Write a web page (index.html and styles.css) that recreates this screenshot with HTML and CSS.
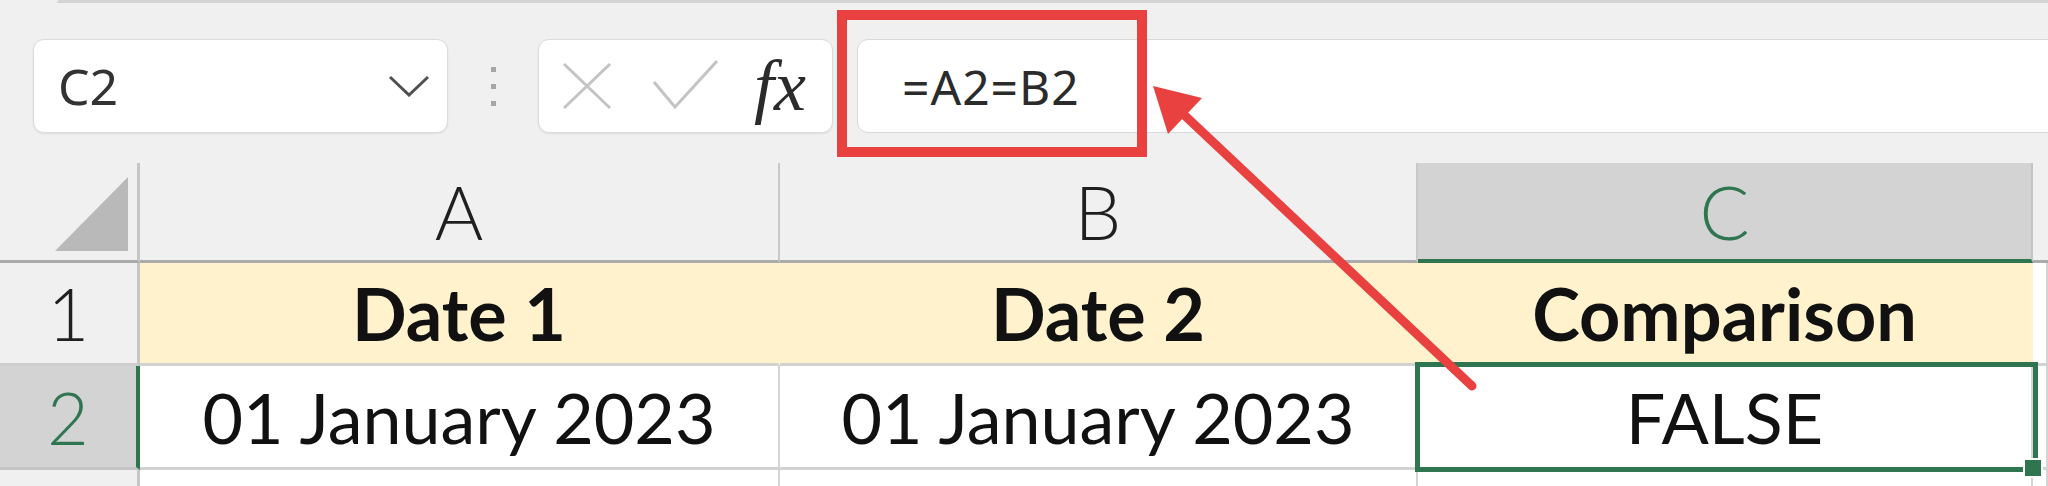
FILE: index.html
```html
<!DOCTYPE html>
<html>
<head>
<meta charset="utf-8">
<title>Excel compare dates</title>
<link rel="stylesheet" href="styles.css">
</head>
<body>
<div class="app">
  <div class="ribbon-edge"></div>
  <div class="formula-bar">
    <div class="name-box">
      <span class="name-text">C2</span>
      <svg class="chevron" viewBox="0 0 42 22"><polyline points="2,2 21,20 40,2" /></svg>
    </div>
    <div class="grip"><span></span><span></span><span></span></div>
    <div class="fx-box">
      <svg class="icon-cancel" viewBox="0 0 50 48"><line x1="2" y1="2" x2="48" y2="46"/><line x1="48" y1="2" x2="2" y2="46"/></svg>
      <svg class="icon-enter" viewBox="0 0 65 52"><polyline points="1,22 22,47 64,1"/></svg>
      <span class="fx">fx</span>
    </div>
    <div class="formula-input">=A2=B2</div>
  </div>
  <div class="sheet">
    <div class="corner"><svg class="corner-tri" viewBox="0 0 137 97"><polygon points="128,14 128,88 55,88"/></svg></div>
    <div class="col-head">A</div>
    <div class="col-head">B</div>
    <div class="col-head active">C</div>
    <div class="col-head filler"></div>

    <div class="row-head">1</div>
    <div class="cell title">Date 1</div>
    <div class="cell title">Date 2</div>
    <div class="cell title">Comparison</div>
    <div class="cell"></div>

    <div class="row-head active">2</div>
    <div class="cell">01 January 2023</div>
    <div class="cell">01 January 2023</div>
    <div class="cell sel">FALSE<span class="sel-frame"></span><span class="fill-handle"></span></div>
    <div class="cell"></div>

    <div class="row-head last"></div>
    <div class="cell last"></div>
    <div class="cell last"></div>
    <div class="cell last"></div>
    <div class="cell last"></div>
  </div>
  <svg class="annotation" viewBox="0 0 2048 486">
    <rect x="842" y="15" width="300" height="137" />
    <line x1="1472" y1="386" x2="1180" y2="111" />
    <polygon points="1153,86 1202,98 1168,134" />
  </svg>
</div>
</body>
</html>
```

FILE: styles.css
```css
* { box-sizing: border-box; }
html, body { margin: 0; padding: 0; }
body {
  width: 2048px;
  height: 486px;
  overflow: hidden;
  background: #f0f0f0;
  font-family: Lato, "Noto Sans", sans-serif;
}
.app {
  position: relative;
  width: 2048px;
  height: 486px;
  overflow: hidden;
}
.ribbon-edge {
  height: 3px;
  margin-left: 57px;
  background: #d3d3d3;
  border-top-left-radius: 3px;
}
.formula-bar {
  display: flex;
  align-items: center;
  height: 160px;
  padding: 36px 0 30px 33px;
}
.name-box {
  flex: none;
  width: 415px;
  height: 94px;
  background: #fff;
  border: 1px solid #dcdcdc;
  border-radius: 11px;
  box-shadow: 0 1px 2px rgba(0,0,0,0.08);
  display: flex;
  align-items: center;
  justify-content: space-between;
  padding: 0 17px 0 24px;
}
.name-text {
  font-family: "Noto Sans", sans-serif;
  font-size: 50px;
  line-height: 1;
  color: #333;
}
.chevron { width: 42px; height: 22px; }
.chevron polyline { fill: none; stroke: #505050; stroke-width: 3; }
.grip {
  flex: none;
  width: 5px;
  margin: 0 42px 0 43px;
  display: flex;
  flex-direction: column;
  gap: 12px;
}
.grip span { display: block; width: 5px; height: 5px; background: #a6a6a6; }
.fx-box {
  flex: none;
  width: 295px;
  height: 94px;
  background: #fff;
  border: 1px solid #dcdcdc;
  border-radius: 11px;
  box-shadow: 0 1px 2px rgba(0,0,0,0.08);
  display: flex;
  align-items: center;
  padding-left: 23px;
}
.icon-cancel { width: 50px; height: 48px; margin-right: 41px; }
.icon-cancel line { stroke: #c4c4c4; stroke-width: 3; }
.icon-enter { width: 65px; height: 52px; margin-right: 36px; }
.icon-enter polyline { fill: none; stroke: #c4c4c4; stroke-width: 3; }
.fx {
  font-family: "Liberation Serif", serif;
  font-style: italic;
  font-size: 72px;
  line-height: 1;
  color: #2b2b2b;
}
.formula-input {
  flex: 1;
  height: 94px;
  margin-left: 24px;
  margin-right: -30px;
  background: #fff;
  border: 1px solid #d8d8d8;
  border-radius: 11px;
  display: flex;
  align-items: center;
  padding-left: 44px;
  font-family: "Noto Sans", sans-serif;
  font-size: 48px;
  letter-spacing: 1px;
  color: #2b2b2b;
}
.sheet {
  display: grid;
  grid-template-columns: 140px 640px 638px 615px 1fr;
  grid-template-rows: 100px 103px 104px 1fr;
  height: 323px;
}
.corner {
  background: #f0f0f0;
  border-right: 3px solid #c6c6c6;
  border-bottom: 3px solid #ababab;
}
.corner-tri { display: block; width: 137px; height: 97px; }
.corner-tri polygon { fill: #b9b9b9; }
.col-head {
  background: #f0f0f0;
  border-right: 2px solid #c8c8c8;
  border-bottom: 3px solid #ababab;
  display: flex;
  align-items: center;
  justify-content: center;
  font-size: 74px;
  font-weight: 300;
  color: #1f1f1f;
}
.col-head.active {
  background: #d3d3d3;
  color: #2e7550;
  border-bottom: 4px solid #2e7550;
  border-right-color: #c4c4c4;
}
.col-head.filler { border-right: none; }
.row-head {
  background: #f0f0f0;
  border-right: 3px solid #c6c6c6;
  border-bottom: 3px solid #cdcdcd;
  display: flex;
  align-items: center;
  justify-content: center;
  font-size: 72px;
  font-weight: 300;
  color: #1f1f1f;
}
.row-head.active {
  background: #d3d3d3;
  color: #2e7550;
  border-right: 4px solid #2e7550;
  border-bottom-color: #c4c4c4;
}
.row-head.last { border-bottom: none; }
.cell {
  background: #fff;
  border-right: 2px solid #d4d4d4;
  border-bottom: 3px solid #d2d2d2;
  display: flex;
  align-items: center;
  justify-content: center;
  font-size: 70px;
  color: #111;
  white-space: nowrap;
}
.cell.title {
  background: #fff2cc;
  border-right-color: #fff2cc;
  font-weight: 700;
  font-size: 72px;
}
.cell.last { border-bottom: none; }
.cell.sel { position: relative; }
.sel-frame {
  position: absolute;
  top: -4px;
  left: -3px;
  right: -7px;
  bottom: -5px;
  border: 5px solid #2e7550;
  z-index: 2;
}
.fill-handle {
  position: absolute;
  width: 16px;
  height: 16px;
  right: -10px;
  bottom: -9px;
  background: #2e7550;
  box-shadow: 0 0 0 2px #fff;
  z-index: 3;
}
.annotation {
  position: absolute;
  top: 0;
  left: 0;
  width: 2048px;
  height: 486px;
  pointer-events: none;
  z-index: 5;
}
.annotation rect { fill: none; stroke: #e8413f; stroke-width: 10; }
.annotation line { stroke: #e8413f; stroke-width: 9; stroke-linecap: round; }
.annotation polygon { fill: #e8413f; }
```
